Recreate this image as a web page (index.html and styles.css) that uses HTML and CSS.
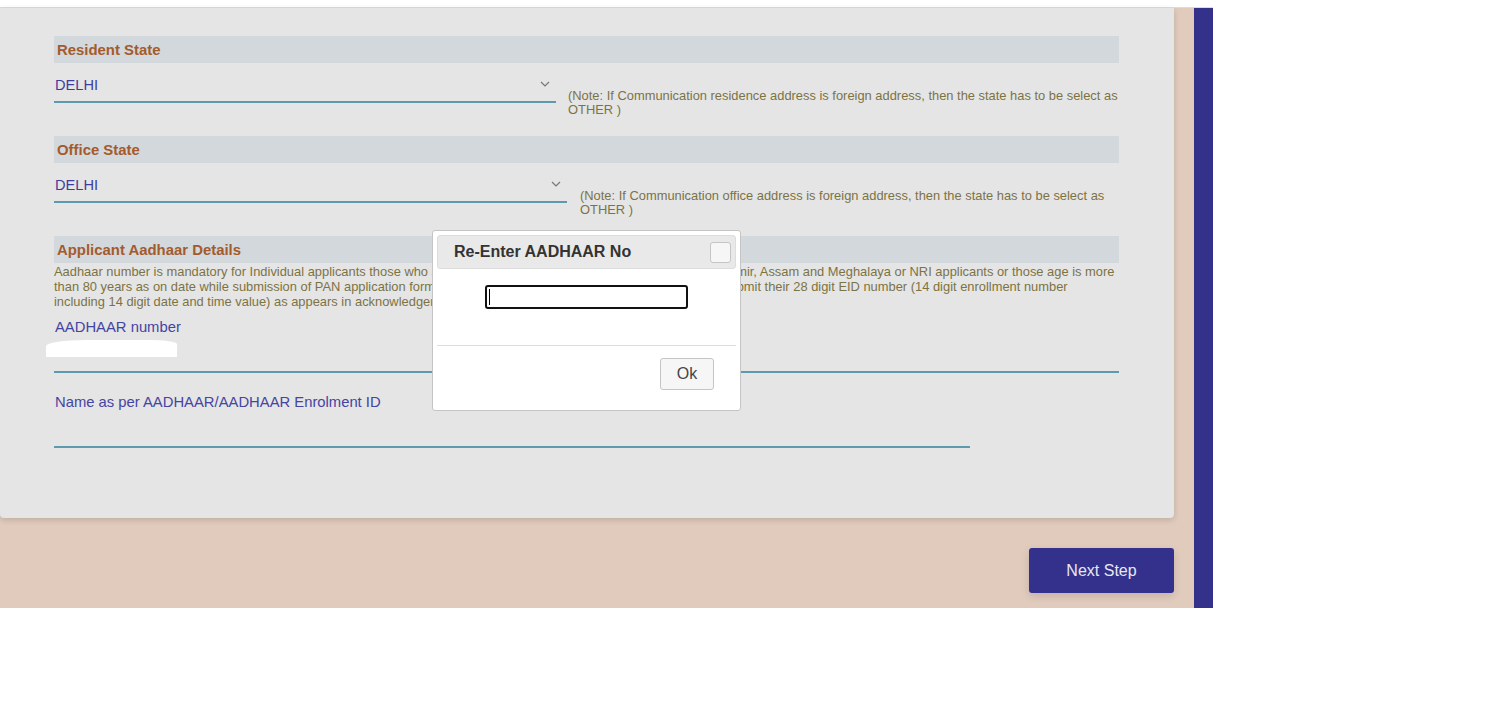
FILE: index.html
```html
<!DOCTYPE html>
<html lang="en">
  <head>
    <meta charset="UTF-8" />
    <meta name="viewport" content="width=device-width, initial-scale=1.0" />
    <title>PAN Application</title>
    <link rel="stylesheet" href="styles.css">
  </head>
  <body>
    <div class="page">
      <div class="main">
        <div class="card">
          <!-- resident state -->
          <div class="section">
            <div class="section-title">Resident State</div>
            <div class="state-row">
              <div class="select select-res">
                <span>DELHI</span>
                <svg class="chevron" width="10" height="6" viewBox="0 0 10 6"><path d="M1 1l4 4 4-4" fill="none" stroke="#777" stroke-width="1.2"/></svg>
              </div>
              <div class="note note-res">(Note: If Communication residence address is foreign address, then the state has to be select as OTHER )</div>
            </div>
          </div>

          <!-- office state -->
          <div class="section">
            <div class="section-title">Office State</div>
            <div class="state-row">
              <div class="select select-off">
                <span>DELHI</span>
                <svg class="chevron" width="10" height="6" viewBox="0 0 10 6"><path d="M1 1l4 4 4-4" fill="none" stroke="#777" stroke-width="1.2"/></svg>
              </div>
              <div class="note note-off">(Note: If Communication office address is foreign address, then the state has to be select as OTHER )</div>
            </div>
          </div>

          <!-- aadhaar -->
          <div class="section">
            <div class="section-title">Applicant Aadhaar Details</div>
            <p class="info">Aadhaar number is mandatory for Individual applicants those who are not residing in the state namely Jammu and Kashmir, Assam and Meghalaya or NRI applicants or those age is more than 80 years as on date while submission of PAN application form. Applicants, who have not received Aadhaar, may submit their 28 digit EID number (14 digit enrollment number including 14 digit date and time value) as appears in acknowledgement slip.</p>
            <div class="field-label">AADHAAR number</div>
            <div class="field field-aadhaar"><span class="redact"></span></div>
            <div class="field-label name-label">Name as per AADHAAR/AADHAAR Enrolment ID</div>
            <div class="field field-name"></div>
          </div>
        </div>

        <div class="actions">
          <button class="next-button">Next Step</button>
        </div>
      </div>
      <div class="side-bar"></div>
    </div>

    <div class="dialog">
      <div class="dialog-title">
        <span>Re-Enter AADHAAR No</span>
        <span class="dialog-close"></span>
      </div>
      <div class="dialog-body">
        <div class="dialog-input"><span class="caret"></span></div>
      </div>
      <div class="dialog-buttons">
        <button class="ok-button">Ok</button>
      </div>
    </div>
  </body>
</html>
```

FILE: styles.css
```css
* {
  margin: 0;
  padding: 0;
  box-sizing: border-box;
}

body {
  font-family: "Liberation Sans", Arial, sans-serif;
  background: #fff;
  padding-top: 7px;
}

.page {
  display: flex;
  width: 1213px;
  height: 601px;
  background: #e0cbbd;
  border-top: 1px solid #dcdcdc;
}

.main {
  width: 1194px;
  padding-right: 20px;
}

.card {
  height: 510px;
  background: #e5e5e5;
  border-radius: 0 0 4px 4px;
  box-shadow: 0 2px 6px rgba(0, 0, 0, 0.15);
  padding: 28px 55px 0 54px;
}

.section {
  margin-bottom: 20px;
}

.section-title {
  height: 27px;
  line-height: 25px;
  padding: 2px 0 0 3px;
  background: #d3d8dc;
  color: #a35b2d;
  font-size: 14.9px;
  font-weight: bold;
}

.state-row {
  display: flex;
  align-items: flex-start;
  height: 43px;
  margin-top: 10px;
}

.select {
  display: flex;
  justify-content: space-between;
  align-items: flex-start;
  height: 30px;
  padding: 4px 6px 0 1px;
  border-bottom: 2px solid #5d9aad;
  color: #3d3d9e;
  font-size: 14.6px;
  flex: none;
}

.chevron {
  margin-top: 4px;
}

.select-res {
  width: 502px;
}

.select-off {
  width: 513px;
}

.note {
  margin-top: 16px;
  font-size: 12.9px;
  line-height: 14px;
  color: #7c7344;
  flex: none;
}

.note-res {
  width: 560px;
  margin-left: 12px;
}

.note-off {
  width: 539px;
  margin-left: 13px;
}

.info {
  font-size: 12.9px;
  line-height: 15px;
  color: #7c7344;
  padding-top: 1px;
}

.field-label {
  margin-top: 10px;
  padding-left: 1px;
  font-size: 14.8px;
  line-height: 16px;
  color: #4444a2;
}

.name-label {
  margin-top: 21px;
}

.field {
  border-bottom: 2px solid #5d9aad;
}

.field-aadhaar {
  height: 38px;
  padding-top: 5px;
}

.field-name {
  width: 916px;
  height: 38px;
}

.redact {
  display: block;
  width: 131px;
  height: 17px;
  margin-left: -8px;
  background: #fff;
  border-radius: 40px 30px 0 0 / 6px 4px 0 0;
}

.actions {
  display: flex;
  justify-content: flex-end;
  padding-top: 30px;
}

.next-button {
  width: 145px;
  height: 45px;
  background: #33318b;
  color: #e8e8f2;
  border: none;
  border-radius: 3px;
  font-family: inherit;
  font-size: 16px;
  box-shadow: 0 3px 8px rgba(0, 0, 0, 0.12);
  cursor: pointer;
}

.side-bar {
  width: 19px;
  background: #33318a;
}

/* re-enter dialog */
.dialog {
  position: absolute;
  left: 432px;
  top: 230px;
  width: 309px;
  height: 181px;
  padding: 4px;
  background: #fff;
  border: 1px solid #c5c5c5;
  border-radius: 3px;
}

.dialog-title {
  display: flex;
  justify-content: space-between;
  align-items: center;
  height: 34px;
  padding: 0 4px 0 16px;
  background: #e9e9e9;
  border: 1px solid #dddddd;
  border-radius: 3px;
  color: #333;
  font-size: 16px;
  font-weight: bold;
}

.dialog-close {
  width: 21px;
  height: 21px;
  background: #f6f6f6;
  border: 1px solid #c5c5c5;
  border-radius: 3px;
}

.dialog-body {
  display: flex;
  justify-content: center;
  height: 76px;
  padding-top: 16px;
}

.dialog-input {
  width: 203px;
  height: 24px;
  border: 2px solid #111;
  border-radius: 3px;
  padding: 2px 0 0 2px;
}

.caret {
  display: block;
  width: 1px;
  height: 16px;
  background: #000;
}

.dialog-buttons {
  display: flex;
  justify-content: flex-end;
  border-top: 1px solid #dddddd;
  padding: 12px 22px 0 0;
}

.ok-button {
  width: 54px;
  height: 32px;
  background: #f6f6f6;
  border: 1px solid #c5c5c5;
  border-radius: 3px;
  color: #454545;
  font-family: inherit;
  font-size: 16px;
}
```
